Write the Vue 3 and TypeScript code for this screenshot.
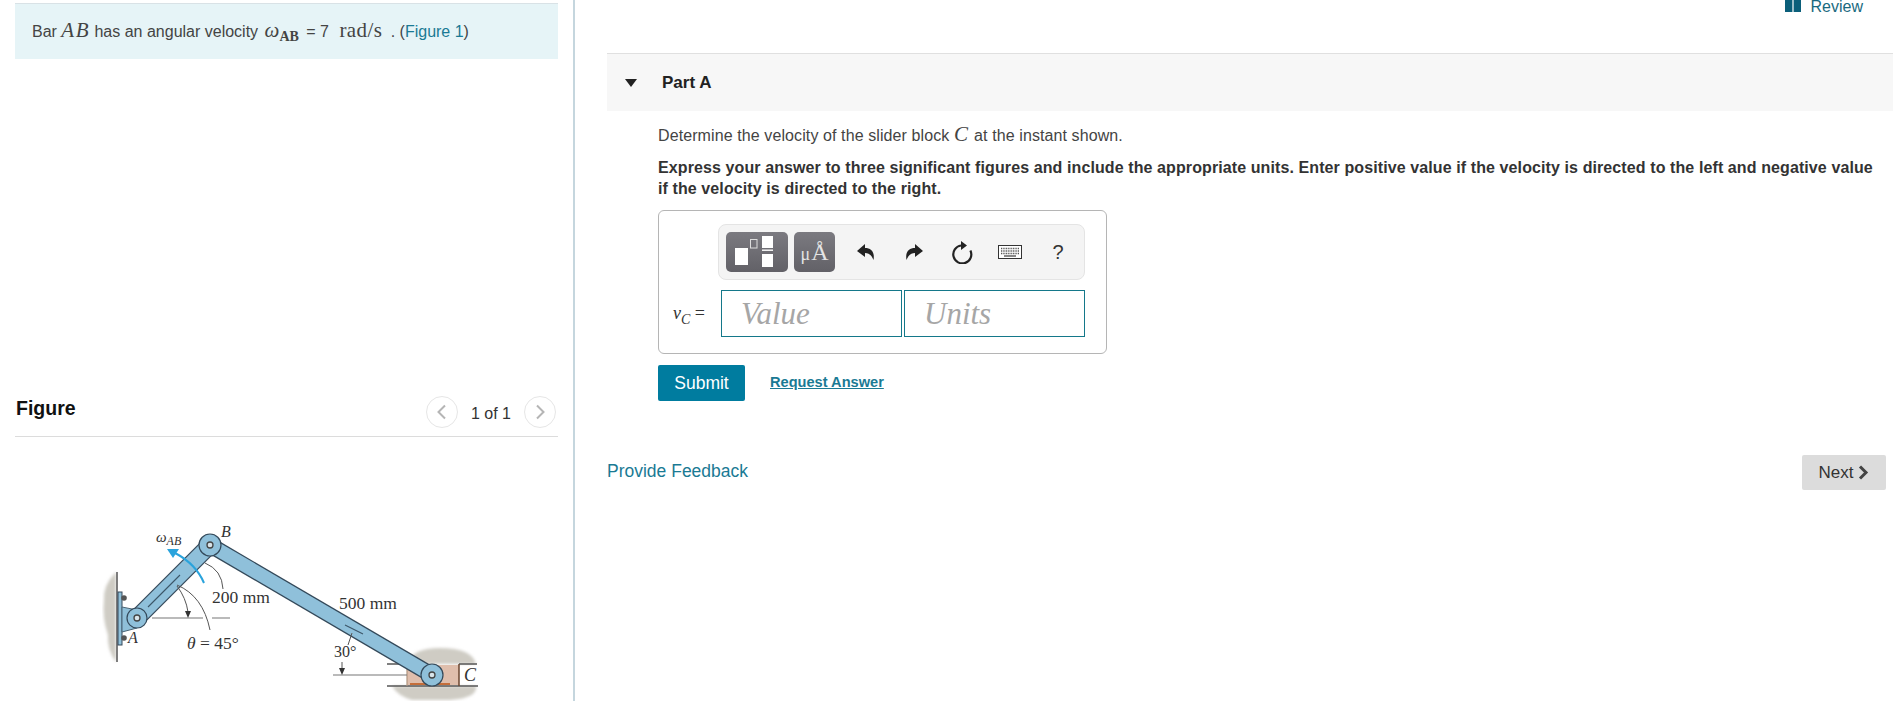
<script setup lang="ts">
const slots = ['undo', 'redo', 'reset', 'keys', 'help'];
const pins = [
  { x: 137, y: 618, r: 10 },
  { x: 210, y: 545, r: 11 },
  { x: 432, y: 675, r: 11 },
];
</script>

<template>
  <div class="page">
    <aside class="left">
      <div class="problem">
        Bar <i class="m big">AB</i> has an angular velocity
        <span class="m"><i class="omega">ω</i><sub class="sub-ab">AB</sub></span> = 7
        <span class="m unit">rad/s</span> . (<a class="link">Figure 1</a>)
      </div>

      <div class="fig-head">
        <h2>Figure</h2>
        <div class="pager">
          <span class="round">
            <svg width="11" height="16" viewBox="0 0 11 16"><path d="M9 1.5 2.5 8 9 14.5" fill="none" stroke="#b5b5b5" stroke-width="2" /></svg>
          </span>
          <span class="count">1 of 1</span>
          <span class="round">
            <svg width="11" height="16" viewBox="0 0 11 16"><path d="M2 1.5 8.5 8 2 14.5" fill="none" stroke="#b5b5b5" stroke-width="2" /></svg>
          </span>
        </div>
      </div>

      <svg class="diagram" width="544" height="201" viewBox="15 500 544 201">
        <defs>
          <filter id="soft"><feGaussianBlur stdDeviation="1.8" /></filter>
        </defs>
        <path d="M104 600Q103 585 116 572V662Q107 650 108 635 102 618 104 600Z" fill="#cfccc4" filter="url(#soft)" />
        <path d="M407 664Q412 648 440 648 472 648 476 664ZM392 686H476Q478 698 450 700H412Q398 696 392 686Z" fill="#cfccc4" filter="url(#soft)" />
        <path d="M117 572V662" stroke="#555" stroke-width="1.5" />
        <rect x="118" y="592" width="4" height="53" fill="#8fbfd8" stroke="#34495a" stroke-width="1" />
        <circle cx="124" cy="598" r="2.8" fill="#555" />
        <circle cx="124" cy="638" r="2.8" fill="#555" />
        <path d="M122 607 137 610V628L122 632Z" fill="#8fbfd8" stroke="#4b6576" stroke-width="1" />

        <rect x="407" y="665" width="52" height="20" fill="#dfbeac" />
        <path d="M410 684H450" stroke="#c56e3a" stroke-width="2" />
        <path d="M387 664H407M459 664H477M387 686H478" stroke="#555" stroke-width="1.5" />
        <path d="M407 664V686" stroke="#b0947f" stroke-width="1.2" />
        <path d="M459 664V686" stroke="#6b4630" stroke-width="1.5" />

        <path d="M210 545 432 675" stroke="#34495a" stroke-width="16" />
        <path d="M210 545 432 675" stroke="#8fc0da" stroke-width="13.5" />
        <path d="M137 618 210 545" stroke="#34495a" stroke-width="18" />
        <path d="M137 618 210 545" stroke="#8fc0da" stroke-width="15.5" />
        <path d="M148 607 180 575M345 625 363 634" stroke="#3c5668" stroke-width="1.1" />
        <circle
          v-for="p in pins"
          :key="p.x"
          :cx="p.x"
          :cy="p.y"
          :r="p.r"
          fill="#8fc0da"
          stroke="#34495a"
          stroke-width="1.2"
        />
        <circle v-for="p in pins" :key="p.y" :cx="p.x" :cy="p.y" r="3" fill="#d8e4ea" stroke="#444" stroke-width="1.3" />

        <path d="M152 618H203M212 618H230M333 675H407" stroke="#777" stroke-width="1.2" />
        <path d="M177 585Q203 596 210 630M205 563Q222 570 223 589M352 633 348 645M177 586Q186 598 188 612M342 662V670" fill="none" stroke="#555" stroke-width="1" />
        <path d="M188 618 185 611H191ZM342 675 339 668H345Z" fill="#333" />
        <path d="M204 583Q196 564 175 553" fill="none" stroke="#2aa3dc" stroke-width="2" />
        <path d="M167 549 179 549 173 558Z" fill="#2aa3dc" />

        <text x="156" y="542" class="lab it" font-size="15">ω<tspan font-size="12" dy="3">AB</tspan></text>
        <text x="221" y="537" class="lab it" font-size="16">B</text>
        <text x="128" y="643" class="lab it" font-size="16">A</text>
        <text x="212" y="603" class="lab" font-size="17.5">200 mm</text>
        <text x="339" y="609" class="lab" font-size="17.5">500 mm</text>
        <text x="187" y="649" class="lab" font-size="17.5"><tspan class="it">θ</tspan> = 45°</text>
        <text x="334" y="657" class="lab" font-size="16">30°</text>
        <text x="464" y="681" class="lab it" font-size="18">C</text>
      </svg>
    </aside>

    <main class="right">
      <div class="review">
        <svg width="16" height="12" viewBox="0 0 16 12"><path d="M0 0H7.4V12H0ZM8.6 0H16V12H8.6Z" fill="#0b5f7a" /></svg>
        <span>Review</span>
      </div>

      <div class="part-head">
        <svg width="12" height="8" viewBox="0 0 12 8"><path d="M0 0H12L6 8Z" fill="#222" /></svg>
        <strong>Part A</strong>
      </div>

      <section class="part-body">
        <p class="q">Determine the velocity of the slider block <i class="m big">C</i> at the instant shown.</p>
        <p class="instr">
          Express your answer to three significant figures and include the appropriate units. Enter positive value if the velocity is directed to the left and negative value if the velocity is directed to the right.
        </p>

        <div class="answer">
          <div class="toolbar">
            <button class="tool wide">
              <svg width="62" height="40" viewBox="0 0 62 40">
                <rect x="9" y="16" width="13" height="17" fill="#fff" />
                <rect x="24.5" y="7.5" width="6.5" height="8.5" fill="none" stroke="#ddd" stroke-width="1" />
                <rect x="36" y="4" width="11" height="12" fill="#fff" />
                <rect x="36" y="17.5" width="11" height="1.4" fill="#fff" />
                <rect x="36" y="22" width="11" height="13" fill="#fff" />
              </svg>
            </button>
            <button class="tool units"><small>μ</small>Å</button>
            <div v-for="s in slots" :key="s" class="slot">
              <svg v-if="s === 'undo'" width="18" height="18" viewBox="0 0 18 18"><path d="M0 8 8 1V5C14 5 18 9 16.5 17 14.5 12 12 10 8 10V14Z" fill="#222" /></svg>
              <svg v-else-if="s === 'redo'" width="18" height="18" viewBox="0 0 18 18"><path d="M18 8 10 1V5C4 5 0 9 1.5 17 3.5 12 6 10 10 10V14Z" fill="#222" /></svg>
              <svg v-else-if="s === 'reset'" width="22" height="24" viewBox="0 0 22 24"><path d="M19.4 10.5A9 9 0 1 1 10 5.5" fill="none" stroke="#222" stroke-width="2.2" /><path d="M10 1V10L16 5.5Z" fill="#222" /></svg>
              <svg v-else-if="s === 'keys'" width="24" height="14" viewBox="0 0 24 14">
                <rect x=".5" y=".5" width="23" height="13" fill="#fff" stroke="#333" />
                <path d="M3 3.5H21M3 6H21M3 8.5H21" stroke="#555" stroke-width="1.3" stroke-dasharray="1 .7" />
                <path d="M6 11H18" stroke="#555" stroke-width="1.4" />
              </svg>
              <span v-else class="help">?</span>
            </div>
          </div>
          <div class="row">
            <label class="var"><i class="m">v<sub>C</sub></i> =</label>
            <input class="field" placeholder="Value" />
            <input class="field" placeholder="Units" />
          </div>
        </div>

        <div class="actions">
          <button class="submit">Submit</button>
          <a class="request">Request Answer</a>
        </div>
      </section>

      <div class="foot">
        <a class="link feedback">Provide Feedback</a>
        <button class="next">
          Next
          <svg width="11" height="15" viewBox="0 0 11 15"><path d="M2 1.5 8 7.5 2 13.5" fill="none" stroke="#444" stroke-width="3" /></svg>
        </button>
      </div>
    </main>
  </div>
</template>

<style>
body {
  margin: 0;
  background: #fff;
  overflow: hidden;
}
</style>

<style scoped>
.page {
  display: flex;
  height: 701px;
  overflow: hidden;
  font-family: 'Liberation Sans', Arial, sans-serif;
  font-size: 16px;
  color: #333;
}

.left {
  box-sizing: border-box;
  width: 575px;
  flex: none;
  padding: 3px 15px 0 15px;
  border-right: 2px solid #c5d6de;
}

.problem {
  height: 56px;
  box-sizing: border-box;
  line-height: 52px;
  padding-left: 17px;
  background: #e6f4f7;
  border-top: 1px solid #d9e2e6;
  color: #444;
}

.m {
  font-family: 'Liberation Serif', 'Times New Roman', serif;
}

.big {
  font-size: 21px;
  letter-spacing: 1.5px;
}

.omega {
  font-size: 21px;
  margin-left: 2px;
}

.m sub {
  font-size: 14px;
  line-height: 0;
}

.sub-ab {
  font-weight: bold;
  margin-right: 3px;
}

.unit {
  font-size: 21px;
  margin-left: 6px;
  margin-right: 4px;
  letter-spacing: .4px;
}

.link {
  color: #1a7a94;
}

.fig-head {
  margin-top: 326px;
  height: 52px;
  box-sizing: border-box;
  border-bottom: 1px solid #dcdcdc;
  display: flex;
  justify-content: space-between;
  align-items: flex-start;
}

.fig-head h2 {
  margin: 12px 0 0 1px;
  font-size: 19.5px;
  line-height: 22px;
  color: #111;
}

.pager {
  display: flex;
  align-items: center;
  gap: 13px;
  margin-top: 11px;
  padding-right: 2px;
}

.count {
  margin-top: 3px;
}

.round {
  box-sizing: border-box;
  width: 32px;
  height: 32px;
  border: 1px solid #e6e6e6;
  border-radius: 50%;
  display: flex;
  align-items: center;
  justify-content: center;
}

.diagram {
  display: block;
  margin-top: 63px;
}

.lab {
  font-family: 'Liberation Serif', serif;
  fill: #333;
}

.it {
  font-style: italic;
}

.right {
  flex: 1;
  min-width: 0;
  padding-left: 32px;
}

.review {
  height: 53px;
  display: flex;
  justify-content: flex-end;
  gap: 10px;
  padding-right: 30px;
  color: #1a6a80;
  line-height: 14px;
}

.part-head {
  height: 58px;
  box-sizing: border-box;
  border-top: 1px solid #e0e0e0;
  background: #f7f7f7;
  display: flex;
  align-items: center;
  gap: 25px;
  padding-left: 18px;
}

.part-head strong {
  font-size: 17px;
  color: #222;
}

.part-body {
  padding: 13px 9px 0 51px;
}

.q {
  margin: 0;
  line-height: 20px;
  letter-spacing: .1px;
  color: #444;
}

.instr {
  margin: 12px 0 0;
  line-height: 20.5px;
  font-weight: bold;
  letter-spacing: .1px;
  color: #333;
}

.answer {
  box-sizing: border-box;
  width: 449px;
  height: 144px;
  margin-top: 11px;
  padding: 13px 21px 0 59px;
  border: 1px solid #b5b5b5;
  border-radius: 6px;
}

.toolbar {
  box-sizing: border-box;
  height: 56px;
  display: flex;
  align-items: center;
  padding-left: 7px;
  background: #f4f4f4;
  border: 1px solid #e4e4e4;
  border-radius: 8px;
}

.tool {
  height: 40px;
  padding: 0;
  border: 0;
  border-radius: 5px;
  background: linear-gradient(#7b7a80, #626167);
  display: block;
}

.wide {
  width: 62px;
}

.units {
  width: 41px;
  margin-left: 6px;
  margin-right: 7px;
  color: #e4e4e4;
  font: 24px/40px 'Liberation Serif', serif;
}

.units small {
  font-size: 18px;
  margin-right: 1px;
}

.slot {
  width: 48px;
  display: flex;
  justify-content: center;
}

.help {
  font-size: 20px;
  color: #333;
}

.row {
  display: flex;
  align-items: center;
  gap: 2px;
  margin-top: 10px;
  margin-left: -59px;
}

.var {
  width: 60px;
  box-sizing: border-box;
  padding-left: 14px;
  font-family: 'Liberation Serif', serif;
  font-size: 18px;
}

.field {
  box-sizing: border-box;
  width: 181px;
  height: 47px;
  padding: 0 0 0 19px;
  border: 1px solid #14788a;
  border-radius: 0;
  background: #fff;
  outline: none;
  font: italic 31px 'Liberation Serif', serif;
}

.field::placeholder {
  color: #a6a6a6;
  opacity: 1;
}

.actions {
  display: flex;
  align-items: center;
  gap: 25px;
  margin-top: 11px;
}

.submit {
  width: 87px;
  height: 36px;
  padding: 0;
  border: 0;
  border-radius: 2px;
  background: #007c9f;
  color: #fff;
  font: 17.5px 'Liberation Sans', sans-serif;
}

.request {
  margin-bottom: 2px;
  color: #1a7a94;
  font-size: 14.6px;
  font-weight: bold;
  text-decoration: underline;
}

.foot {
  display: flex;
  justify-content: space-between;
  align-items: center;
  margin-top: 54px;
  padding-right: 7px;
}

.feedback {
  margin-top: -2px;
  font-size: 17.5px;
}

.next {
  box-sizing: border-box;
  width: 84px;
  height: 35px;
  padding: 0;
  border: 0;
  border-radius: 2px;
  background: #dcdcdc;
  color: #333;
  font: 17px 'Liberation Sans', sans-serif;
  display: flex;
  align-items: center;
  justify-content: center;
  gap: 5px;
}
</style>
